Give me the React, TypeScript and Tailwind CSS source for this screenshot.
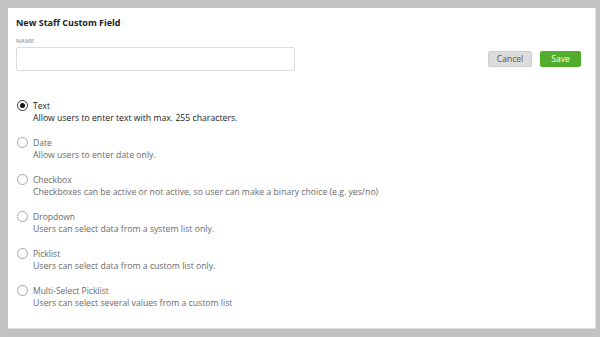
import { useState } from "react";

type FieldType = {
  id: string;
  label: string;
  description: string;
};

const fieldTypes: FieldType[] = [
  { id: "text", label: "Text", description: "Allow users to enter text with max. 255 characters." },
  { id: "date", label: "Date", description: "Allow users to enter date only." },
  {
    id: "checkbox",
    label: "Checkbox",
    description:
      "Checkboxes can be active or not active, so user can make a binary choice (e.g. yes/no)",
  },
  { id: "dropdown", label: "Dropdown", description: "Users can select data from a system list only." },
  { id: "picklist", label: "Picklist", description: "Users can select data from a custom list only." },
  {
    id: "multi",
    label: "Multi-Select Picklist",
    description: "Users can select several values from a custom list",
  },
];

export default function App() {
  const [selected, setSelected] = useState("text");
  const [name, setName] = useState("");

  return (
    <div
      className="w-[600px] h-[337px] bg-[#c2c2c2] pl-2 pr-1 py-2"
      style={{ fontFamily: '"Open Sans", "Liberation Sans", sans-serif' }}
    >
      <div className="h-full bg-white border-r border-b border-[#e2e2e2] pl-2 pr-[14px] pt-[8px]">
        <h1 className="text-[9px] leading-[14px] font-bold text-[#222]">New Staff Custom Field</h1>

        <div className="mt-[7px] flex items-end justify-between">
          <div>
            <label className="block text-[6px] leading-[8px] font-semibold tracking-wide text-[#9a9a9a]">
              NAME
            </label>
            <input
              type="text"
              value={name}
              onChange={(e) => setName(e.target.value)}
              className="mt-[2px] block w-[279px] h-[24px] rounded-[2px] border border-[#dcdcdc] bg-white px-2 text-[9px] focus:outline-none"
            />
          </div>
          <div className="flex gap-2 mb-[4px]">
            <button className="w-[44px] h-[16px] rounded-[2px] bg-[#dcdcdc] border border-[#cfcfcf] text-[8.5px] leading-none text-[#555]">
              Cancel
            </button>
            <button className="w-[41px] h-[16px] rounded-[2px] bg-[#52ad2c] text-[8.5px] leading-none text-white">
              Save
            </button>
          </div>
        </div>

        <div className="mt-[28px] pl-[1px] flex flex-col gap-[11px]">
          {fieldTypes.map((f) => {
            const active = selected === f.id;
            return (
              <label
                key={f.id}
                className="flex items-start gap-[5px] cursor-pointer"
                onClick={() => setSelected(f.id)}
              >
                <span
                  className={`mt-[1px] w-[11px] h-[11px] rounded-full border flex items-center justify-center shrink-0 ${
                    active ? "border-[#333]" : "border-[#a8a8a8]"
                  }`}
                >
                  {active && <span className="w-[5px] h-[5px] rounded-full bg-[#111]" />}
                </span>
                <span className="flex flex-col">
                  <span
                    className={`text-[8.5px] leading-[13px] ${active ? "text-[#222]" : "text-[#6a6a6a]"}`}
                  >
                    {f.label}
                  </span>
                  <span
                    className={`text-[8.7px] leading-[13px] ${active ? "text-[#222]" : "text-[#6a6a6a]"}`}
                  >
                    {f.description}
                  </span>
                </span>
              </label>
            );
          })}
        </div>
      </div>
    </div>
  );
}
